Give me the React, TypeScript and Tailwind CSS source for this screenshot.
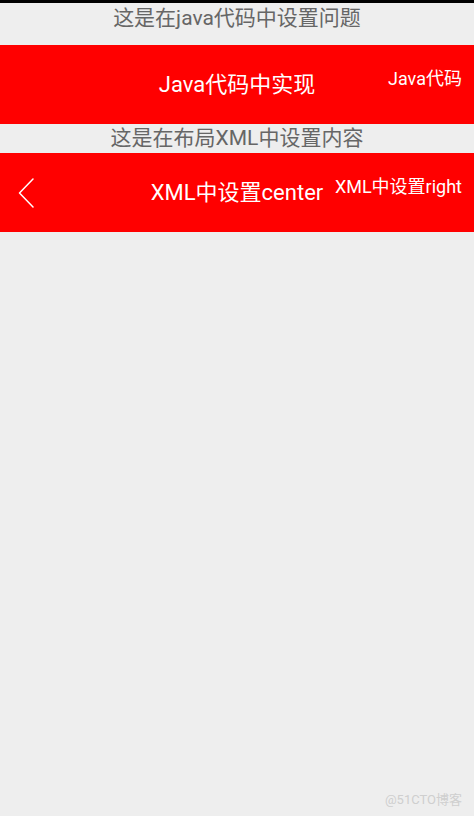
import React from "react";

const font = { fontFamily: 'Roboto, "Noto Sans CJK SC", sans-serif' };

export default function App() {
  return (
    <div
      className="relative min-h-[816px] w-full bg-[#eeeeee] flex flex-col"
      style={font}
    >
      <div className="h-[3px] bg-black" />
      <div className="h-[42px] flex justify-center">
        <span className="text-[21px] leading-[31px] text-[#666666]">这是在java代码中设置问题</span>
      </div>
      <div className="h-[79px] bg-[#ff0000] grid grid-cols-[1fr_auto_1fr] items-center">
        <div />
        <span className="text-[22px] text-white leading-none">Java代码中实现</span>
        <div className="flex justify-end pr-3">
          <span className="text-[18px] text-white leading-none mb-[11px]">Java代码</span>
        </div>
      </div>
      <div className="h-[29px] flex items-center justify-center">
        <span className="text-[21px] leading-[29px] text-[#666666]">这是在布局XML中设置内容</span>
      </div>
      <div className="h-[79px] bg-[#ff0000] grid grid-cols-[1fr_auto_1fr] items-center">
        <div className="pl-[18px] flex items-center">
          <svg width="16" height="30" viewBox="0 0 16 30" fill="none">
            <path d="M15 1 L1.5 15 L15 29" stroke="white" strokeWidth="1.5" strokeLinecap="round" strokeLinejoin="round" />
          </svg>
        </div>
        <span className="text-[22px] text-white leading-none">XML中设置center</span>
        <div className="flex justify-end pr-3">
          <span className="text-[18px] text-white leading-none mb-[11px]">XML中设置right</span>
        </div>
      </div>
      <div className="absolute right-3 bottom-[7px] text-[13px] text-[#cfcfcf]">@51CTO博客</div>
    </div>
  );
}
